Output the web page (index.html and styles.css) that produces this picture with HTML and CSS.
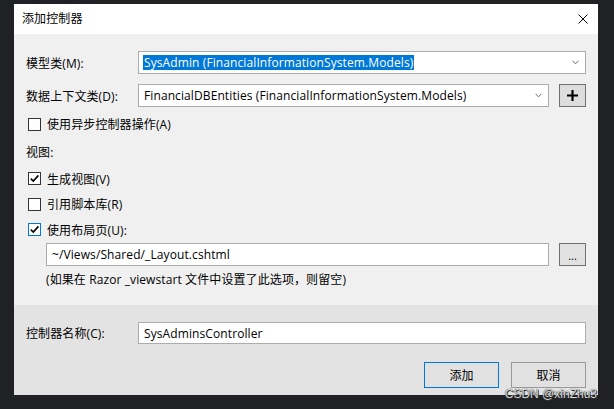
FILE: index.html
```html
<!DOCTYPE html>
<html lang="zh-CN">
<head>
<meta charset="utf-8">
<title>添加控制器</title>
<link rel="stylesheet" href="styles.css">
</head>
<body>
<div class="screen">
  <div class="dialog">
    <div class="titlebar">
      <span class="title">添加控制器</span>
      <svg class="close" width="10" height="10" viewBox="0 0 10 10"><path d="M0.5 0.5 L9.5 9.5 M9.5 0.5 L0.5 9.5" stroke="#000" stroke-width="1" fill="none"/></svg>
    </div>
    <div class="content">
      <div class="field r-model">
        <span class="lbl">模型类(M):</span>
        <div class="combo">
          <span class="sel">SysAdmin (FinancialInformationSystem.Models)</span>
          <svg class="chev" width="7" height="5" viewBox="0 0 7 5"><path d="M0.5 0.8 L3.5 3.8 L6.5 0.8" stroke="#666" stroke-width="1" fill="none"/></svg>
        </div>
      </div>
      <div class="field r-ctx">
        <span class="lbl">数据上下文类(D):</span>
        <div class="combo">
          <span class="val">FinancialDBEntities (FinancialInformationSystem.Models)</span>
          <svg class="chev" width="7" height="5" viewBox="0 0 7 5"><path d="M0.5 0.8 L3.5 3.8 L6.5 0.8" stroke="#666" stroke-width="1" fill="none"/></svg>
        </div>
        <button class="sqbtn plus"><svg width="11" height="11" viewBox="0 0 11 11"><path d="M5.5 0 V11 M0 5.5 H11" stroke="#000" stroke-width="2.2" fill="none"/></svg></button>
      </div>
      <div class="check r-chk1"><span class="box"></span><span>使用异步控制器操作(A)</span></div>
      <div class="section r-view">视图:</div>
      <div class="check r-chk2"><span class="box"><svg width="11" height="11" viewBox="0 0 11 11"><path d="M1.8 5.6 L4.3 8.1 L9.4 2.4" stroke="#000" stroke-width="1.6" fill="none"/></svg></span><span>生成视图(V)</span></div>
      <div class="check r-chk3"><span class="box"></span><span>引用脚本库(R)</span></div>
      <div class="check r-chk4"><span class="box focus"><svg width="11" height="11" viewBox="0 0 11 11"><path d="M1.8 5.6 L4.3 8.1 L9.4 2.4" stroke="#000" stroke-width="1.6" fill="none"/></svg></span><span>使用布局页(U):</span></div>
      <div class="layoutrow">
        <div class="textbox">~/Views/Shared/_Layout.cshtml</div>
        <button class="sqbtn dots">...</button>
      </div>
      <div class="hint">(如果在 Razor _viewstart 文件中设置了此选项，则留空)</div>
    </div>
    <div class="footer">
      <div class="field r-name">
        <span class="lbl">控制器名称(C):</span>
        <div class="textbox">SysAdminsController</div>
      </div>
      <div class="buttons">
        <button class="btn default">添加</button>
        <button class="btn">取消</button>
      </div>
    </div>
  </div>
  <div class="watermark">CSDN @xinZhu3</div>
</div>
</body>
</html>
```
FILE: styles.css
```css
* { box-sizing: border-box; }
html, body { margin: 0; padding: 0; }
body {
  background: #202124;
  width: 614px;
  height: 409px;
  overflow: hidden;
  font-family: "Open Sans", "Noto Sans CJK SC", sans-serif;
  font-size: 12px;
  letter-spacing: 0.1px;
  color: #000;
}
.screen { position: relative; width: 614px; height: 409px; padding: 4px 0 0 14px; }
.dialog { width: 584px; height: 391px; display: flex; flex-direction: column; }
.titlebar {
  height: 30px; background: #fff; display: flex; align-items: center;
  justify-content: space-between; padding: 0 10px 0 8px;
}
.title { line-height: 16px; }
.content { height: 271px; background: #f0f0f0; padding: 17px 12px 0 12px; }
.footer { height: 90px; background: #e3e3e3; padding: 17px 12px 0 12px; }
.field { display: flex; align-items: center; }
.lbl { width: 112px; flex: none; }
.combo, .textbox {
  flex: 1; height: 100%; background: #fff; border: 1px solid #acacac;
  display: flex; align-items: center; padding: 0 6px 0 4px; white-space: nowrap; overflow: hidden;
}
.textbox { padding-left: 5px; }
.sel { background: #0078d7; color: #fff; line-height: 15px; padding: 0 1px; }
.val { padding-left: 1px; }
.chev { margin-left: auto; flex: none; }
.r-model { height: 23px; }
.r-ctx { height: 23px; margin-top: 10px; }
.sqbtn {
  width: 27px; height: 23px; margin-left: 10px; flex: none; padding: 0;
  background: #dddddd; border: 1px solid #707070; display: flex; align-items: center; justify-content: center;
  font-family: "Open Sans", sans-serif; font-size: 11px; color: #000;
}
.sqbtn.dots { background: #e1e1e1; align-items: flex-end; padding-bottom: 4px; line-height: 10px; }
.check { display: flex; align-items: center; }
.box {
  width: 13px; height: 13px; border: 1px solid #333; background: #fff; margin: 0 6px 0 2px;
  display: flex; align-items: center; justify-content: center; flex: none;
}
.box.focus { border-color: #0078d7; }
.r-chk1 { height: 26px; margin-top: 4px; }
.section { height: 29px; display: flex; align-items: center; }
.r-chk2 { height: 25px; }
.r-chk3 { height: 26px; }
.r-chk4 { height: 25px; }
.layoutrow { display: flex; height: 23px; margin-top: 1px; padding-left: 20px; }
.hint { height: 26px; padding-left: 20px; display: flex; align-items: center; }
.r-name { height: 22px; }
.buttons { display: flex; justify-content: flex-end; gap: 12px; margin-top: 18px; }
.btn {
  width: 75px; height: 26px; background: #e1e1e1; border: 1px solid #999; padding: 0;
  font-family: "Open Sans", "Noto Sans CJK SC", sans-serif; font-size: 12px; color: #000;
}
.btn.default { border-color: #0078d7; }
.watermark {
  position: absolute; right: 17px; top: 387px;
  font-family: "Liberation Sans", sans-serif; font-size: 12px; color: #d4d4d4; letter-spacing: 0;
  text-shadow: 0 0 1px #222, 1px 1px 0 #333;
}
```
